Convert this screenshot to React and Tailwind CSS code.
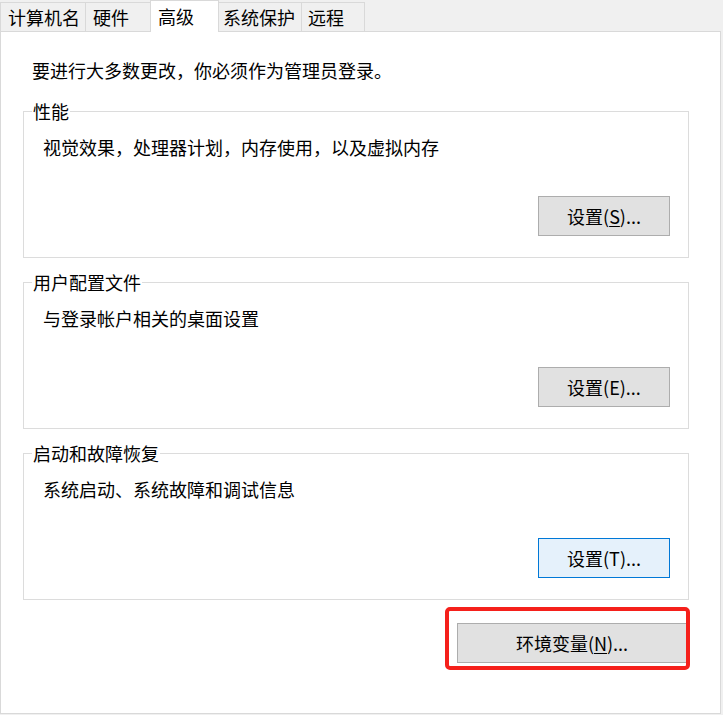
import React from "react";

const tabs = [
  { label: "计算机名", w: "w-[85px]", pl: "pl-[7px]", cls: "border-l border-t" },
  { label: "硬件", w: "w-[65px]", pl: "pl-[7px]", cls: "border-l border-t" },
  { label: "高级", w: "w-[69px]", pl: "pl-[7px]", cls: "", selected: true },
  { label: "系统保护", w: "w-[82px]", pl: "pl-[4px]", cls: "border-t" },
  { label: "远程", w: "w-[64px]", pl: "pl-[6px]", cls: "border-l border-t border-r" },
];

function Btn({ children, focused }) {
  return (
    <button
      className={
        "w-[132px] h-[40px] flex items-center justify-center text-[18px] leading-[24px] text-black border " +
        (focused ? "bg-[#e5f1fb] border-[#0078d7]" : "bg-[#e1e1e1] border-[#adadad]")
      }
    >
      {children}
    </button>
  );
}

function Group({ title, desc, button, focused, className }) {
  return (
    <fieldset className={"border border-[#dcdcdc] h-[159px] px-0 " + (className || "")}>
      <legend className="ml-[8px] px-[1px] text-[18px] leading-[24px] text-black">{title}</legend>
      <div className="pl-[19px] mt-[12px] text-[18px] leading-[24px] text-black">{desc}</div>
      <div className="flex justify-end pr-[18px] mt-[37px]">
        <Btn focused={focused}>{button}</Btn>
      </div>
    </fieldset>
  );
}

export default function App() {
  return (
    <div className="w-[723px] h-[715px] bg-[#f0f0f0] font-['Noto_Sans_CJK_SC','Microsoft_YaHei',sans-serif] text-black overflow-hidden">
      <div className="flex items-start h-[31px]">
        {tabs.map((t) =>
          t.selected ? (
            <div
              key={t.label}
              className={`relative z-10 ${t.w} h-[32px] bg-white border-l border-r border-t border-[#d9d9d9] ${t.pl} pt-[3px] text-[18px] leading-[24px]`}
            >
              {t.label}
            </div>
          ) : (
            <div
              key={t.label}
              className={`${t.w} mt-[2px] h-[29px] bg-[#f0f0f0] border-[#d9d9d9] ${t.cls} ${t.pl} pt-[2px] text-[18px] leading-[24px]`}
            >
              {t.label}
            </div>
          )
        )}
      </div>
      <div className="w-[721px] h-[683px] bg-white border border-[#d9d9d9] pl-[22px] pr-[31px] pt-[26px]">
        <div className="pl-[9px] text-[18px] leading-[24px]">要进行大多数更改，你必须作为管理员登录。</div>
        <Group
          className="mt-[17px]"
          title="性能"
          desc="视觉效果，处理器计划，内存使用，以及虚拟内存"
          button={<span>设置(<u className="underline-offset-2">S</u>)...</span>}
        />
        <Group
          className="mt-[12px]"
          title="用户配置文件"
          desc="与登录帐户相关的桌面设置"
          button={<span>设置(E)...</span>}
        />
        <Group
          className="mt-[12px]"
          title="启动和故障恢复"
          desc="系统启动、系统故障和调试信息"
          button={<span>设置(T)...</span>}
          focused
        />
        <div className="flex justify-end mt-[23px] pr-[2px]">
          <div className="relative">
            <button className="w-[230px] h-[40px] bg-[#e1e1e1] border border-[#adadad] text-[18px] leading-[24px] flex items-center justify-center">
              环境变量(<u className="underline-offset-2">N</u>)...
            </button>
            <div className="absolute left-[-12px] right-[-3px] top-[-16px] bottom-[-7px] border-[4px] border-[#f5201b] rounded-[5px] pointer-events-none" />
          </div>
        </div>
      </div>
    </div>
  );
}
